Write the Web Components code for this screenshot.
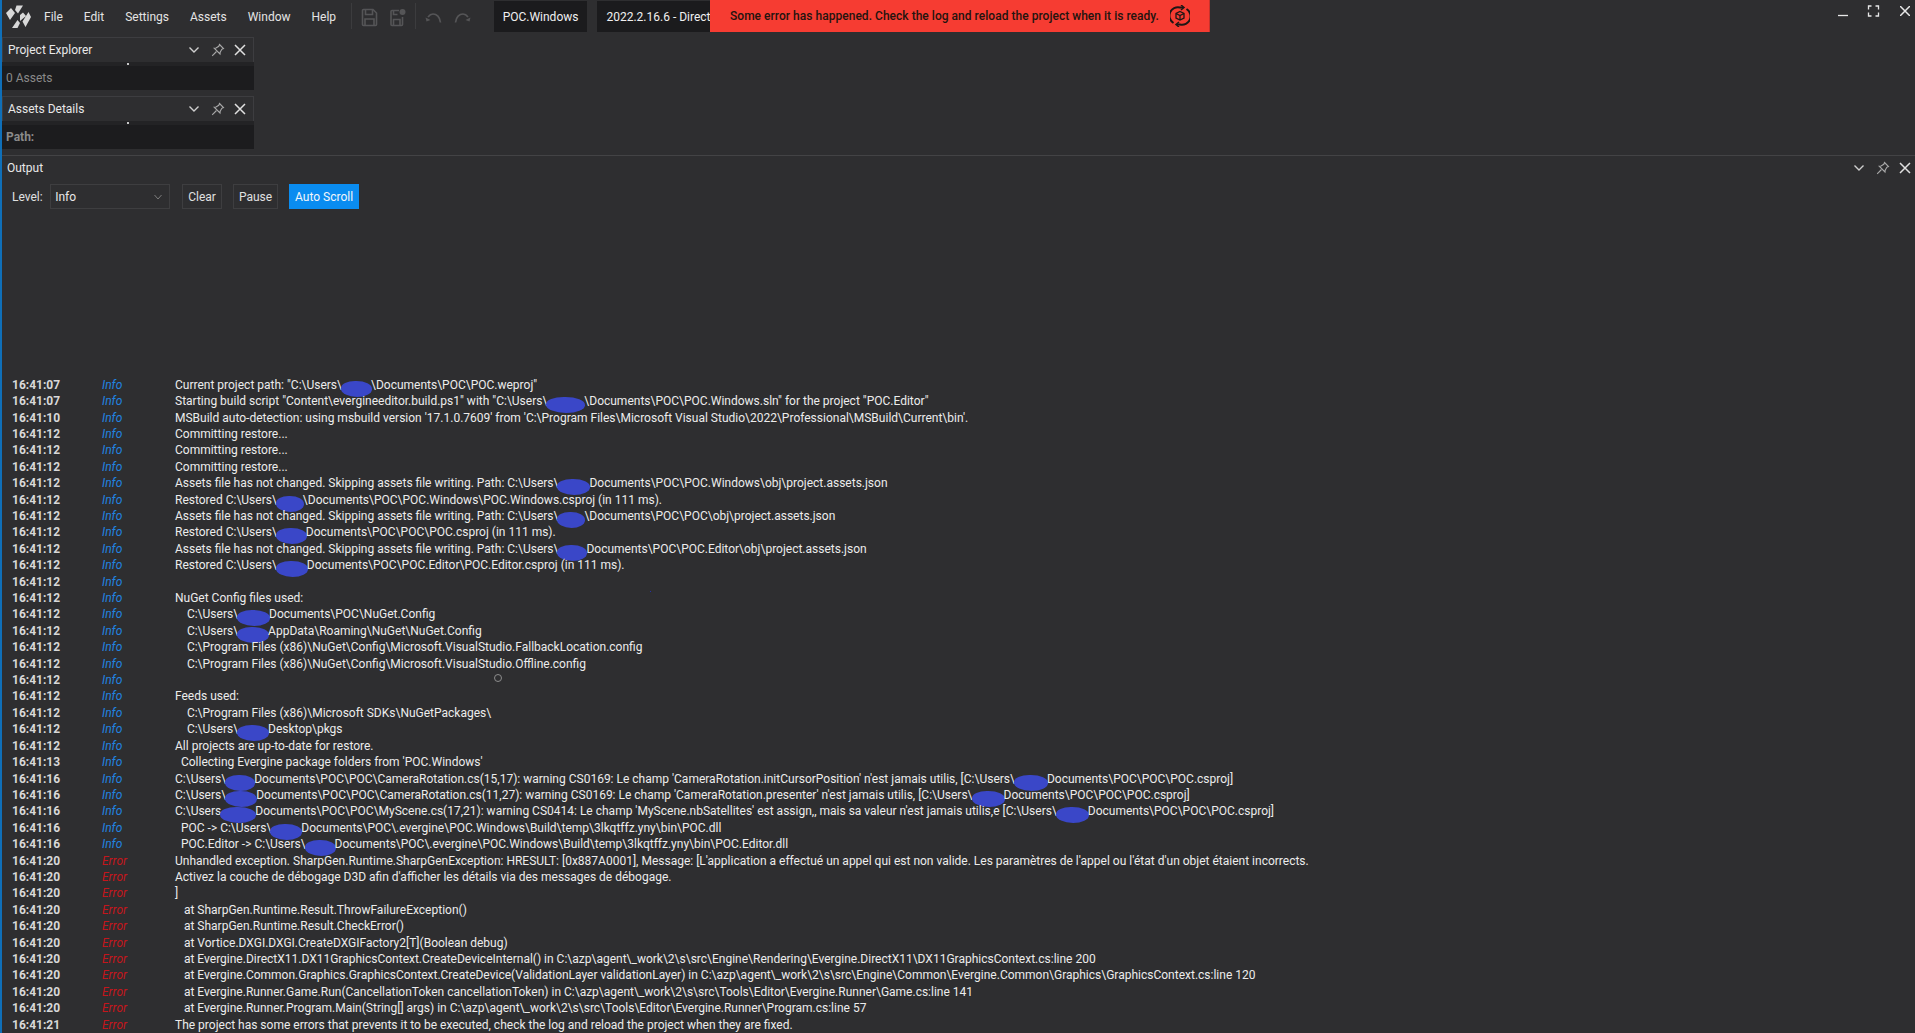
<!doctype html>
<html>
<head>
<meta charset="utf-8">
<style>
  html, body { margin: 0; height: 100%; background: #2e2e30; overflow: hidden; }
  body { font: 12px Roboto, sans-serif; color: #e6e6e6; }
</style>
</head>
<body>
<editor-shell></editor-shell>
<script>
const ICONS = {
  chevron: '<svg width="12" height="12" viewBox="0 0 12 12" fill="none" stroke="currentColor" stroke-width="1.4"><path d="M1.5 3.5 6 8l4.5-4.5"/></svg>',
  pin: '<svg width="14" height="14" viewBox="0 0 14 14" fill="none" stroke="currentColor" stroke-width="1.1"><path d="M8.500 1.500 12.500 5.500 10.800 6.300 9.200 9.200 9 11 3.200 5.200 5 5 7.800 3.300z"/><path d="M5.500 8.500 1.200 12.800"/></svg>',
  close: '<svg width="12" height="12" viewBox="0 0 12 12" fill="none" stroke="currentColor" stroke-width="1.5"><path d="M1 1l10 10M11 1 1 11"/></svg>'
}

customElements.define('pane-header', class extends HTMLElement {
  constructor () {
    super()
    this.attachShadow({ mode: 'open' }).innerHTML = `
<style>
  :host { display: flex; align-items: center; height: 24px; padding: 0 3px 0 5px; color: #e8e8e8; }
  .t { flex: 1; }
  .b { display: flex; width: 24px; justify-content: center; color: #cfcfcf; }
  .b.p { color: #a8a8a8; }
  .b.x { color: #e0e0e0; width: 20px; }
</style>
<span class="t"><slot></slot></span>
<span class="b">${ICONS.chevron}</span>
<span class="b p">${ICONS.pin}</span>
<span class="b x">${ICONS.close}</span>`
  }
})

customElements.define('side-pane', class extends HTMLElement {
  constructor () {
    super()
    this.attachShadow({ mode: 'open' }).innerHTML = `
<style>
  :host { display: block; width: 252px; margin-bottom: 6px; }
  .h { border: 1px solid #3d3d40; border-bottom: 0; }
  .grip { height: 4px; background: #232325; position: relative; }
  .grip::after { content: ""; position: absolute; left: 125px; top: 1px; width: 2px; height: 2px; background: #c8c8c8; }
  .body { height: 24px; line-height: 24px; background: #1c1c1e; color: #8a8a8a; padding-left: 4px; font-weight: var(--w, 400); }
</style>
<div class="h"><pane-header>${this.getAttribute('title')}</pane-header></div>
<div class="grip"></div>
<div class="body"><slot></slot></div>`
  }
})

customElements.define('top-bar', class extends HTMLElement {
  constructor () {
    super()
    this.attachShadow({ mode: 'open' }).innerHTML = `
<style>
  :host { display: flex; align-items: center; height: 32px; position: relative; box-sizing: border-box; }
  .logo { width: 36px; height: 32px; margin-right: 6px; flex: none; }
  .m { margin: 2px 21px 0 0; color: #e4e4e4; white-space: nowrap; }
  .sep { width: 1px; height: 26px; background: #3c3c3e; }
  .tool { display: flex; margin: 2px 0 0 9px; color: #555557; }
  .tool + .tool { margin-left: 12.5px; }
  .sel { background: #1b1b1d; height: 31px; line-height: 33px; padding: 0 9px; color: #f0f0f0; margin-right: 10px; white-space: nowrap; flex: none; }
  .win { position: absolute; right: 0; top: 0; display: flex; align-items: flex-start; color: #e8e8e8; }
  .win svg { display: block; }
  .err { position: absolute; left: 708px; top: 0; width: 500px; height: 32px; box-sizing: border-box; background: #f63c32; color: #24140f; display: flex; align-items: center; padding-left: 20px; font-weight: 500; letter-spacing: .03px; border-right: 1px solid #c9312a; white-space: nowrap; }
  .err svg { margin-left: 11px; }
</style>
<svg class="logo" viewBox="0 0 36 32" fill="#d8d8d8"><path d="M4 13 9 8 13 13 8 20zM14.500 5.500H21L16 13.500 13 10zM18 15 21 12.500 24 16 18 21zM26.500 12 29 17 23.500 27 20.500 21.500zM15.500 20 18 23 15.500 28H10z"/></svg>
<span class="m">File</span><span class="m">Edit</span><span class="m">Settings</span><span class="m">Assets</span><span class="m">Window</span><span class="m" style="margin-right:14.5px">Help</span>
<span class="sep"></span>
<span class="tool"><svg width="17" height="19" viewBox="0 0 17 19" fill="none" stroke="currentColor" stroke-width="1.6"><path d="M1.500 2.500a1 1 0 0 1 1-1h9.500l3.500 3.500v11.500a1 1 0 0 1-1 1h-12a1 1 0 0 1-1-1z"/><path d="M4.500 1.500v5h7v-5M4 17.500v-6.500h9v6.500"/></svg></span>
<span class="tool" style="margin-right:7.500px"><svg width="17" height="19" viewBox="0 0 17 19" fill="none" stroke="currentColor" stroke-width="1.6"><path d="M9 2.500H2a1 1 0 0 0-1 1v13a1 1 0 0 0 1 1h9.500a1 1 0 0 0 1-1V9"/><path d="M3.500 2.500v4h4M3.500 17.500v-6h6.500v6"/><circle cx="12.500" cy="4" r="3" fill="currentColor" stroke="none"/></svg></span>
<span class="sep"></span>
<span class="tool"><svg width="17" height="14" viewBox="0 0 17 14" fill="none" stroke="currentColor" stroke-width="1.700"><path d="M15.500 12.500C15 7 11.500 4 8 4 6 4 4.500 5 3 7"/><path d="M.5 7.500 5.500 10 1.500 11.500z" fill="currentColor" stroke="none"/></svg></span>
<span class="tool" style="margin-right:23px;margin-left:12px"><svg width="17" height="14" viewBox="0 0 17 14" fill="none" stroke="currentColor" stroke-width="1.700"><path d="M1.500 12.500C2 7 5.500 4 9 4c2 0 3.500 1 5 3"/><path d="M16.500 7.500 11.500 10 15.500 11.500z" fill="currentColor" stroke="none"/></svg></span>
<span class="sel">POC.Windows</span>
<span class="sel">2022.2.16.6 - DirectX11</span>
<div class="err"><span>Some error has happened. Check the log and reload the project when it is ready.</span>
<svg width="20" height="22" viewBox="0 0 20 22" fill="none" stroke="#1d1716" stroke-width="2"><path d="M3.500 18A8.500 8.500 0 0 1 10 2.500h3M16.500 4A8.500 8.500 0 0 1 10 19.500H7"/><path d="M11 0l3 2.500-3 2.500M9 17l-3 2.500 3 2.500" stroke-width="1.500"/><path d="M10 6.500l4 2v4.500l-4 2-4-2V8.500zM6 8.500l4 2 4-2M10 10.500V15" stroke-width="1.300"/></svg></div>
<div class="win">
  <svg width="135" height="18" viewBox="0 0 135 18" fill="none" stroke="currentColor" stroke-width="1.300"><path d="M59 15.500h10"/><path d="M89.500 10V6.500h3M96.500 6.500h3V10M99.500 13v3.500h-3M92.500 16.500h-3V13" transform="translate(0 -.5)"/></svg>
  <svg style="margin:6px 5px 0 -14px" width="10" height="10" viewBox="0 0 10 10" fill="none" stroke="currentColor" stroke-width="1.500"><path d="M0 0l10 10M10 0 0 10"/></svg>
</div>`
  }
})

customElements.define('flat-button', class extends HTMLElement {
  constructor () {
    super()
    this.attachShadow({ mode: 'open' }).innerHTML = `
<style>
  :host { display: inline-flex; align-items: center; height: 25px; box-sizing: border-box; padding: 0 5px; border: 1px solid #3e3e40; color: #e0e0e0; white-space: nowrap; }
  :host([active]) { background: #0a8cf0; border-color: #0a8cf0; color: #f2f6fa; }
</style>
<slot></slot>`
  }
})

customElements.define('level-select', class extends HTMLElement {
  constructor () {
    super()
    this.attachShadow({ mode: 'open' }).innerHTML = `
<style>
  :host { display: flex; align-items: center; width: 120px; height: 25px; box-sizing: border-box; border: 1px solid #3e3e40; padding: 0 6px 0 4px; color: #e8e8e8; }
  span { flex: 1; }
  svg { color: #7c7c7c; }
</style>
<span><slot></slot></span>
<svg width="10" height="10" viewBox="0 0 10 10" fill="none" stroke="currentColor"><path d="M1.500 3 5 7l3.500-4"/></svg>`
  }
})

// the hand-drawn blue scribble covering the user name
customElements.define('blur-mark', class extends HTMLElement {
  constructor () {
    super()
    this.attachShadow({ mode: 'open' }).innerHTML = `
<style>
  :host { display: inline-block; vertical-align: -4px; width: var(--w, 26px); height: 16px; margin: -3px -1px; background: #3a47c8; border-radius: 45% 50% 48% 52%; }
</style>`
  }
})

customElements.define('log-row', class extends HTMLElement {
  constructor () {
    super()
    const level = this.getAttribute('level')
    this.attachShadow({ mode: 'open' }).innerHTML = `
<style>
  :host { display: flex; height: 16.41px; line-height: 16.41px; white-space: pre; color: #ececec; }
  .time { width: 90px; font-weight: 700; color: #d8d8d8; }
  .level { width: 73px; font-style: italic; color: ${level === 'Error' ? '#c4161c' : '#2184e0'}; }
</style>
<span class="time">${this.getAttribute('time')}</span>
<span class="level">${level}</span>
<span><slot></slot></span>`
  }
})

customElements.define('log-view', class extends HTMLElement {
  constructor () {
    super()
    this.attachShadow({ mode: 'open' }).innerHTML = `
<style>
  :host { display: flex; flex-direction: column; flex: 1; justify-content: flex-end; padding: 0 0 0 10px; overflow: hidden; }
</style>
<slot></slot>`
  }
})

const esc = s => s.replace(/&/g, '&amp;').replace(/</g, '&lt;').replace(/\{(\d+)\}/g, '<blur-mark style="--w:$1px"></blur-mark>')

const LOG = [
  ['16:41:07', 'Info', 'Current project path: "C:\\Users\\{31}\\Documents\\POC\\POC.weproj"'],
  ['16:41:07', 'Info', 'Starting build script "Content\\evergineeditor.build.ps1" with "C:\\Users\\{39}\\Documents\\POC\\POC.Windows.sln" for the project "POC.Editor"'],
  ['16:41:10', 'Info', "MSBuild auto-detection: using msbuild version '17.1.0.7609' from 'C:\\Program Files\\Microsoft Visual Studio\\2022\\Professional\\MSBuild\\Current\\bin'."],
  ['16:41:12', 'Info', 'Committing restore...'],
  ['16:41:12', 'Info', 'Committing restore...'],
  ['16:41:12', 'Info', 'Committing restore...'],
  ['16:41:12', 'Info', 'Assets file has not changed. Skipping assets file writing. Path: C:\\Users\\{33}Documents\\POC\\POC.Windows\\obj\\project.assets.json'],
  ['16:41:12', 'Info', 'Restored C:\\Users\\{28}\\Documents\\POC\\POC.Windows\\POC.Windows.csproj (in 111 ms).'],
  ['16:41:12', 'Info', 'Assets file has not changed. Skipping assets file writing. Path: C:\\Users\\{28}\\Documents\\POC\\POC\\obj\\project.assets.json'],
  ['16:41:12', 'Info', 'Restored C:\\Users\\{31}Documents\\POC\\POC\\POC.csproj (in 111 ms).'],
  ['16:41:12', 'Info', 'Assets file has not changed. Skipping assets file writing. Path: C:\\Users\\{30}Documents\\POC\\POC.Editor\\obj\\project.assets.json'],
  ['16:41:12', 'Info', 'Restored C:\\Users\\{32}Documents\\POC\\POC.Editor\\POC.Editor.csproj (in 111 ms).'],
  ['16:41:12', 'Info', ''],
  ['16:41:12', 'Info', 'NuGet Config files used:'],
  ['16:41:12', 'Info', '    C:\\Users\\{33}Documents\\POC\\NuGet.Config'],
  ['16:41:12', 'Info', '    C:\\Users\\{32}AppData\\Roaming\\NuGet\\NuGet.Config'],
  ['16:41:12', 'Info', '    C:\\Program Files (x86)\\NuGet\\Config\\Microsoft.VisualStudio.FallbackLocation.config'],
  ['16:41:12', 'Info', '    C:\\Program Files (x86)\\NuGet\\Config\\Microsoft.VisualStudio.Offline.config'],
  ['16:41:12', 'Info', ''],
  ['16:41:12', 'Info', 'Feeds used:'],
  ['16:41:12', 'Info', '    C:\\Program Files (x86)\\Microsoft SDKs\\NuGetPackages\\'],
  ['16:41:12', 'Info', '    C:\\Users\\{32}Desktop\\pkgs'],
  ['16:41:12', 'Info', 'All projects are up-to-date for restore.'],
  ['16:41:13', 'Info', "  Collecting Evergine package folders from 'POC.Windows'"],
  ['16:41:16', 'Info', "C:\\Users\\{30}Documents\\POC\\POC\\CameraRotation.cs(15,17): warning CS0169: Le champ 'CameraRotation.initCursorPosition' n'est jamais utilis, [C:\\Users\\{34}Documents\\POC\\POC\\POC.csproj]"],
  ['16:41:16', 'Info', "C:\\Users\\{32}Documents\\POC\\POC\\CameraRotation.cs(11,27): warning CS0169: Le champ 'CameraRotation.presenter' n'est jamais utilis, [C:\\Users\\{33}Documents\\POC\\POC\\POC.csproj]"],
  ['16:41:16', 'Info', "C:\\Users{36}Documents\\POC\\POC\\MyScene.cs(17,21): warning CS0414: Le champ 'MyScene.nbSatellites' est assign,, mais sa valeur n'est jamais utilis,e [C:\\Users\\{33}Documents\\POC\\POC\\POC.csproj]"],
  ['16:41:16', 'Info', '  POC -> C:\\Users\\{32}Documents\\POC\\.evergine\\POC.Windows\\Build\\temp\\3lkqtffz.yny\\bin\\POC.dll'],
  ['16:41:16', 'Info', '  POC.Editor -> C:\\Users\\{31}Documents\\POC\\.evergine\\POC.Windows\\Build\\temp\\3lkqtffz.yny\\bin\\POC.Editor.dll'],
  ['16:41:20', 'Error', "Unhandled exception. SharpGen.Runtime.SharpGenException: HRESULT: [0x887A0001], Message: [L'application a effectué un appel qui est non valide. Les paramètres de l'appel ou l'état d'un objet étaient incorrects."],
  ['16:41:20', 'Error', "Activez la couche de débogage D3D afin d'afficher les détails via des messages de débogage."],
  ['16:41:20', 'Error', ']'],
  ['16:41:20', 'Error', '   at SharpGen.Runtime.Result.ThrowFailureException()'],
  ['16:41:20', 'Error', '   at SharpGen.Runtime.Result.CheckError()'],
  ['16:41:20', 'Error', '   at Vortice.DXGI.DXGI.CreateDXGIFactory2[T](Boolean debug)'],
  ['16:41:20', 'Error', '   at Evergine.DirectX11.DX11GraphicsContext.CreateDeviceInternal() in C:\\azp\\agent\\_work\\2\\s\\src\\Engine\\Rendering\\Evergine.DirectX11\\DX11GraphicsContext.cs:line 200'],
  ['16:41:20', 'Error', '   at Evergine.Common.Graphics.GraphicsContext.CreateDevice(ValidationLayer validationLayer) in C:\\azp\\agent\\_work\\2\\s\\src\\Engine\\Common\\Evergine.Common\\Graphics\\GraphicsContext.cs:line 120'],
  ['16:41:20', 'Error', '   at Evergine.Runner.Game.Run(CancellationToken cancellationToken) in C:\\azp\\agent\\_work\\2\\s\\src\\Tools\\Editor\\Evergine.Runner\\Game.cs:line 141'],
  ['16:41:20', 'Error', '   at Evergine.Runner.Program.Main(String[] args) in C:\\azp\\agent\\_work\\2\\s\\src\\Tools\\Editor\\Evergine.Runner\\Program.cs:line 57'],
  ['16:41:21', 'Error', 'The project has some errors that prevents it to be executed, check the log and reload the project when they are fixed.']
]

customElements.define('output-pane', class extends HTMLElement {
  constructor () {
    super()
    const rows = LOG.map(([t, l, m]) => `<log-row time="${t}" level="${l}">${esc(m)}</log-row>`).join('')
    this.attachShadow({ mode: 'open' }).innerHTML = `
<style>
  :host { display: flex; flex-direction: column; flex: 1; min-height: 0; border-top: 1px solid #434345; position: relative; }
  .bar { display: flex; align-items: center; gap: 11px; padding: 0 0 0 10px; height: 25px; margin-top: 4px; }
  .lab { margin-right: -3.500px; color: #e0e0e0; }
  level-select { margin-right: 1px; }
  pane-header { padding: 0 0 0 5px; }
  /* busy cursor and a stray dot caught in the capture */
  .ring { position: absolute; left: 492px; top: 518px; width: 6px; height: 6px; border: 1px solid #8c8c8c; border-radius: 50%; }
  .dot { position: absolute; left: 648px; top: 435px; width: 1px; height: 1px; background: #2630a8; }
</style>
<pane-header>Output</pane-header>
<div class="bar"><span class="lab">Level:</span><level-select>Info</level-select><flat-button>Clear</flat-button><flat-button>Pause</flat-button><flat-button active>Auto Scroll</flat-button></div>
<log-view>${rows}</log-view>
<span class="ring"></span><span class="dot"></span>`
  }
})

customElements.define('editor-shell', class extends HTMLElement {
  constructor () {
    super()
    this.attachShadow({ mode: 'open' }).innerHTML = `
<style>
  :host { display: flex; flex-direction: column; height: 100vh; border-left: 2px solid #0f6fb8; box-sizing: border-box; }
  .panes { padding: 5px 0 0 0; height: 123px; box-sizing: border-box; }
  .second { --w: 700; }
</style>
<top-bar></top-bar>
<div class="panes">
  <side-pane title="Project Explorer">0 Assets</side-pane>
  <side-pane class="second" title="Assets Details">Path:</side-pane>
</div>
<output-pane></output-pane>`
  }
})
</script>
</body>
</html>
